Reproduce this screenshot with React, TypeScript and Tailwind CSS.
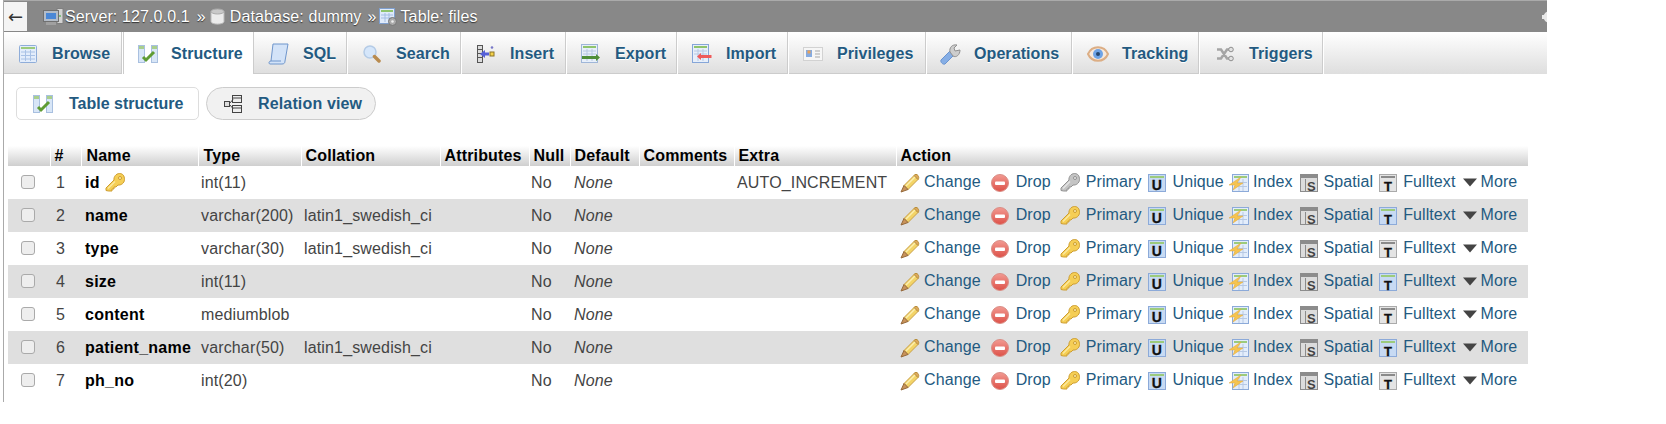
import React from "react";

const S = ({ children, w = 16, h = 16 }: { children: React.ReactNode; w?: number; h?: number }) => (
  <svg width={w} height={h} viewBox={`0 0 ${w} ${h}`} className="shrink-0 block">{children}</svg>
);

const BrowseI = () => (
  <S w={18} h={18}>
    <rect x="0.5" y="0.5" width="17" height="17" rx="1" fill="#e3edfb" stroke="#8fadd9" />
    <rect x="2" y="2" width="14" height="2" fill="#9ccb7c" />
    <path d="M2 7h14M2 10.500h14M2 14h14M6.500 5v11M11.500 5v11" stroke="#a9c2e6" />
  </S>
);
const StructI = () => (
  <S w={20} h={18}>
    <rect x="0.500" y="0.500" width="6" height="17" fill="#d8e6f7" stroke="#a9c0e0" />
    <rect x="13.500" y="0.500" width="6" height="17" fill="#d8e6f7" stroke="#a9c0e0" />
    <rect x="1" y="1" width="5" height="3" fill="#a9cf8d" />
    <rect x="14" y="1" width="5" height="3" fill="#a9cf8d" />
    <path d="M5 12l3 3 8-8" fill="none" stroke="#5f9c33" strokeWidth="3" />
  </S>
);
const SqlI = () => (
  <S w={21} h={22}>
    <path d="M5 1h15l-3 17c0 2-1 3-3 3H2c-1.500 0-1.500-3 1-3L5 1z" fill="#d3e3f8" stroke="#6f96cc" />
    <path d="M3 18h10" stroke="#6f96cc" />
  </S>
);
const SearchI = () => (
  <S w={18} h={18}>
    <circle cx="7" cy="7" r="6" fill="#d5e6fa" stroke="#b4cbe6" strokeWidth="1.500" />
    <path d="M11.500 11.500l4.500 4.500" stroke="#b98b4f" strokeWidth="3.500" strokeLinecap="round" />
  </S>
);
const InsertI = () => (
  <S w={18} h={18}>
    <rect x="0.500" y="0.500" width="5" height="17" fill="#dcdcdc" stroke="#555" />
    <path d="M1 4.500h4M1 8.500h4M1 12.500h4" stroke="#555" />
    <path d="M3 9l5-4v2.500h4v3H8V13z" fill="#5560d8" />
    <rect x="13" y="7" width="4" height="4" fill="#f4d24a" stroke="#8a7326" />
    <circle cx="15" cy="2.500" r="1.300" fill="#7878c8" />
  </S>
);
const ExportI = () => (
  <S w={20} h={20}>
    <rect x="0.500" y="0.500" width="16" height="18" fill="#e7effa" stroke="#9fb6d8" />
    <rect x="2" y="2" width="13" height="2" fill="#8fc46d" />
    <path d="M2 7h13M2 10h13M6 5v12M11 5v12" stroke="#b7c9e4" />
    <path d="M1 12h14v-2l4 3.500-4 3.500v-2H1z" fill="#4f8f3a" />
  </S>
);
const ImportI = () => (
  <S w={20} h={20}>
    <rect x="0.500" y="0.500" width="16" height="18" fill="#e7effa" stroke="#86a6d8" />
    <rect x="2" y="2" width="13" height="2" fill="#8fc46d" />
    <path d="M2 7h13M2 10h13M6 5v12M11 5v12" stroke="#b7c9e4" />
    <path d="M19.500 11H9V9l-4 3.500L9 16v-2h10.500z" fill="#ef5a5a" />
  </S>
);
const PrivI = () => (
  <S w={20} h={16}>
    <rect x="0.500" y="1.500" width="19" height="13" fill="#f6f6f6" stroke="#d2d2d2" />
    <rect x="3" y="4" width="6" height="7" fill="#86abe0" />
    <rect x="4.500" y="4.500" width="3" height="3" fill="#e8a25a" />
    <path d="M12 5h5M12 8h5M12 11h5" stroke="#a9a9a9" />
  </S>
);
const WrenchI = () => (
  <S w={22} h={22}>
    <path d="M1 17l10-10 4 4-10 10c-2 1-5-2-4-4z" fill="#86aee5" stroke="#6a94cf" />
    <path d="M10 9c-1-4 2-8 7-7l-3 3 1 3 5-1c0 5-4 8-7 6z" fill="#cdcdcd" stroke="#909090" />
  </S>
);
const EyeI = () => (
  <S w={22} h={18}>
    <path d="M1 9c4-9 16-9 20 0-4 9-16 9-20 0z" fill="#f7e9dc" stroke="#dcae85" strokeWidth="2" />
    <circle cx="11" cy="9" r="5" fill="#6ea3e6" />
    <circle cx="11" cy="9" r="2" fill="#25466f" />
  </S>
);
const TrigI = () => (
  <S w={18} h={16}>
    <path d="M1 3.500h4l6 9h2M1 12.500h4l6-9h2" fill="none" stroke="#a5a5a5" strokeWidth="2.500" />
    <circle cx="15" cy="3.500" r="2.300" fill="#e2e2e2" stroke="#8f8f8f" />
    <circle cx="15" cy="12.500" r="2.300" fill="#e2e2e2" stroke="#8f8f8f" />
  </S>
);
const RelI = () => (
  <S w={18} h={18}>
    <rect x="8.500" y="0.500" width="9" height="7" fill="#eee" stroke="#444" />
    <rect x="8.500" y="10.500" width="9" height="7" fill="#eee" stroke="#444" />
    <rect x="0.500" y="6.500" width="5" height="5" fill="#ddd" stroke="#444" />
    <path d="M5.500 8.500L9 4.500M5.500 9.500L9 13.500" stroke="#444" />
    <path d="M9 3h8M9 13h8" stroke="#444" />
  </S>
);
const ServerI = () => (
  <S w={21} h={18}>
    <rect x="14" y="0.500" width="6" height="15" fill="#d2d2d2" stroke="#808080" />
    <circle cx="17" cy="8" r="1" fill="#64b864" />
    <rect x="0.500" y="2.500" width="15" height="11" fill="#b3bcc8" stroke="#707070" />
    <rect x="3" y="5" width="10" height="6" fill="#4a87d6" />
    <rect x="3" y="14" width="10" height="3" fill="#a0a0a0" />
  </S>
);
const DbI = () => (
  <S w={15} h={17}>
    <path d="M1 3.500v10c0 3.500 13 3.500 13 0v-10z" fill="#ececec" stroke="#b8b8b8" />
    <ellipse cx="7.500" cy="3.500" rx="6.500" ry="2.500" fill="#c9c9c9" stroke="#aaa" />
  </S>
);
const TableI = () => (
  <S w={18} h={18}>
    <rect x="0.500" y="0.500" width="15" height="15" fill="#dfeafa" stroke="#7f9fce" />
    <rect x="2" y="2" width="12" height="2" fill="#8fc46d" />
    <path d="M2 7h12M2 10h12M6 5v9M10 5v9" stroke="#a4bde2" />
    <circle cx="13.500" cy="13.500" r="4" fill="#aaa" stroke="#777" />
    <circle cx="13.500" cy="13.500" r="1.300" fill="#eee" />
  </S>
);
const GearI = () => (
  <S w={5} h={16}>
    <circle cx="7" cy="8" r="5.500" fill="#e8e8e8" />
    <rect x="0" y="6" width="3" height="4" fill="#e8e8e8" />
  </S>
);

const Pencil = () => (
  <S w={20} h={20}>
    <path d="M4 12.500L14 2.500l4 4-10 10z" fill="#f3d467" stroke="#c9a04a" />
    <path d="M14 2.500c1-1.500 3-1.500 4 0s1 3 0 4z" fill="#dca85a" stroke="#b98f3b" />
    <path d="M6 13l9-9" stroke="#fbeeb0" strokeWidth="1.500" />
    <path d="M4 12.500L1 19l7-2.500z" fill="#c9935a" stroke="#94683a" />
  </S>
);
const DropI = () => (
  <S w={18} h={18}>
    <defs>
      <linearGradient id="dropg" x1="0" y1="0" x2="0" y2="1">
        <stop offset="0" stopColor="#f29a92" />
        <stop offset="1" stopColor="#dd5148" />
      </linearGradient>
    </defs>
    <circle cx="9" cy="9" r="8.500" fill="url(#dropg)" stroke="#d98e86" />
    <rect x="4" y="7.500" width="10" height="3.500" rx="1" fill="#fff" />
  </S>
);
const Key = ({ grey }: { grey?: boolean }) => {
  const f = grey ? "#c4c4c4" : "#f5ce55";
  const s = grey ? "#919191" : "#cd9d30";
  return (
    <S w={20} h={20}>
      <path d="M1 15l8-8c-.500-3 2-6.500 5.500-6.500S19.500 3 19.500 6.500c0 3.500-3.500 6-6.500 5.500l-2 2h-2v2H7v2H3.500L1 17.500z" fill={f} stroke={s} />
      <path d="M3 15.500l7-7" stroke={grey ? "#e5e5e5" : "#fbe9a0"} strokeWidth="1.500" />
      <circle cx="15" cy="5" r="1.500" fill={grey ? "#eee" : "#fdf0b8"} stroke={s} />
    </S>
  );
};
const UniqueI = () => (
  <S w={18} h={18}>
    <rect x="0.500" y="0.500" width="17" height="17" fill="#c7daf3" stroke="#8caad9" />
    <rect x="2" y="2" width="14" height="2" fill="#9ccb7c" />
    <text x="9" y="16" textAnchor="middle" fontFamily="'Liberation Sans', sans-serif" fontWeight="700" fontSize="14" fill="#111" stroke="#111" strokeWidth="0.300">U</text>
  </S>
);
const IndexI = () => (
  <S w={20} h={18}>
    <rect x="3.500" y="0.500" width="16" height="17" fill="#e3edfb" stroke="#8caad9" />
    <rect x="5" y="2" width="13" height="2" fill="#9ccb7c" />
    <path d="M5 8.500h13M5 12.500h13M10 5v12M14 5v12" stroke="#b7c9e4" />
    <path d="M12 3L0 11h6l-2 5 10-7H8z" fill="#f5c451" stroke="#e2a93a" strokeWidth="0.500" />
  </S>
);
const SpatialI = () => (
  <S w={18} h={18}>
    <rect x="0.500" y="0.500" width="17" height="17" fill="#dcdcdc" stroke="#8c8c8c" />
    <rect x="1" y="1" width="16" height="3" fill="#8c8c8c" />
    <path d="M5.500 5v12" stroke="#8c8c8c" />
    <text x="11.500" y="16.500" textAnchor="middle" fontFamily="'Liberation Sans', sans-serif" fontWeight="700" fontSize="13" fill="#444">S</text>
  </S>
);
const FulltextI = ({ on }: { on?: boolean }) => (
  <S w={18} h={18}>
    <rect x="0.500" y="0.500" width="17" height="17" fill={on ? "#c7daf3" : "#e4e4e4"} stroke={on ? "#8caad9" : "#aaa"} />
    <rect x="2" y="2" width="14" height="2" fill={on ? "#9ccb7c" : "#8a8a8a"} />
    <text x="9" y="16.500" textAnchor="middle" fontFamily="'Liberation Sans', sans-serif" fontWeight="700" fontSize="13" fill="#111" stroke="#111" strokeWidth="0.300">T</text>
  </S>
);
const MoreI = () => (
  <S w={14} h={9}>
    <path d="M0 0.500h14L7 8.500z" fill="#444" />
  </S>
);

const tabs = [
  { label: "Browse", w: "w-[119px]", icon: <BrowseI />, iw: "w-[48px]" },
  { label: "Structure", w: "w-[131px]", icon: <StructI />, iw: "w-[47px]" },
  { label: "SQL", w: "w-[94px]", icon: <SqlI />, iw: "w-[49px]" },
  { label: "Search", w: "w-[114px]", icon: <SearchI />, iw: "w-[48px]" },
  { label: "Insert", w: "w-[105px]", icon: <InsertI />, iw: "w-[48px]" },
  { label: "Export", w: "w-[111px]", icon: <ExportI />, iw: "w-[48px]" },
  { label: "Import", w: "w-[111px]", icon: <ImportI />, iw: "w-[48px]" },
  { label: "Privileges", w: "w-[138px]", icon: <PrivI />, iw: "w-[48px]" },
  { label: "Operations", w: "w-[146px]", icon: <WrenchI />, iw: "w-[47px]" },
  { label: "Tracking", w: "w-[127px]", icon: <EyeI />, iw: "w-[49px]" },
  { label: "Triggers", w: "w-[124px]", icon: <TrigI />, iw: "w-[49px]" },
];

const rows = [
  { n: 1, name: "id", type: "int(11)", coll: "", extra: "AUTO_INCREMENT", pk: true },
  { n: 2, name: "name", type: "varchar(200)", coll: "latin1_swedish_ci" },
  { n: 3, name: "type", type: "varchar(30)", coll: "latin1_swedish_ci" },
  { n: 4, name: "size", type: "int(11)", coll: "" },
  { n: 5, name: "content", type: "mediumblob", coll: "" },
  { n: 6, name: "patient_name", type: "varchar(50)", coll: "latin1_swedish_ci" },
  { n: 7, name: "ph_no", type: "int(20)", coll: "" },
];

const headers: [string, string, string][] = [
  ["", "w-[42px]", "pl-[4px]"],
  ["#", "w-[31px]", "pl-[4px]"],
  ["Name", "w-[117px]", "pl-[5px]"],
  ["Type", "w-[103px]", "pl-[5px]"],
  ["Collation", "w-[139px]", "pl-[4px]"],
  ["Attributes", "w-[89px]", "pl-[4px]"],
  ["Null", "w-[41px]", "pl-[4px]"],
  ["Default", "w-[69px]", "pl-[4px]"],
  ["Comments", "w-[95px]", "pl-[4px]"],
  ["Extra", "w-[162px]", "pl-[4px]"],
  ["Action", "", "pl-[4px]"],
];

const A = ({ icon, label, ml, gap }: { icon: React.ReactNode; label: string; ml: string; gap: string }) => (
  <span className={`flex items-center ${gap} ${ml}`}>
    {icon}
    <span className="text-[#235a81] mb-[2px] tracking-[0.1px]">{label}</span>
  </span>
);

export default function App() {
  return (
    <div className="w-[1666px] h-[424px] bg-white overflow-hidden font-['Liberation_Sans',Arial,sans-serif] text-[16px] leading-[18px]">
      <div className="w-[1544px] h-[402px] border-l border-[#aaa] ml-[3px] overflow-hidden">
        <div className="h-[32px] bg-[#888] border-t border-[#aaa] flex items-center text-white [text-shadow:0_1px_1px_#333] tracking-[0.12px]">
          <div className="w-[23px] h-[29px] bg-[#f4f4f4] flex items-center justify-center text-[#333] text-[18px] font-['DejaVu_Sans',sans-serif] [text-shadow:none]">←</div>
          <div className="flex items-center ml-[16px]">
            <ServerI />
            <span className="ml-[1px]">Server: 127.0.0.1</span>
            <span className="ml-[7px]">»</span>
            <span className="ml-[4px]"><DbI /></span>
            <span className="ml-[5px]">Database: dummy</span>
            <span className="ml-[6px]">»</span>
            <span className="ml-[2px]"><TableI /></span>
            <span className="ml-[4px]">Table: files</span>
          </div>
          <div className="ml-auto"><GearI /></div>
        </div>
        <div className="h-[42px] flex bg-linear-to-b from-white to-[#dedede]">
          {tabs.map((t) => (
            <div
              key={t.label}
              className={`${t.w} h-[42px] pt-[1px] flex items-center shrink-0 border-r border-white font-bold text-[#235a81] [text-shadow:0_1px_0_#fff] tracking-[0.08px] ${t.label === "Structure" ? "bg-white border-l border-l-[#ccc] border-r-[#ccc]" : "shadow-[inset_-1px_0_0_#ccc,inset_0_-1px_0_#ccc]"}`}
            >
              <span className={`${t.iw} shrink-0 flex justify-center`}>{t.icon}</span>
              <span>{t.label}</span>
            </div>
          ))}
        </div>
        <div className="flex gap-[7px] ml-[12px] mt-[13px]">
          <div className="w-[183px] h-[33px] bg-white border border-[#ddd] rounded-[5px] flex items-center font-bold text-[#235a81]">
            <span className="w-[52px] flex justify-center"><StructI /></span>
            <span>Table structure</span>
          </div>
          <div className="w-[170px] h-[33px] bg-[#f1f1f1] border border-[#ccc] rounded-[17px] flex items-center font-bold text-[#235a81] tracking-[0.15px]">
            <span className="w-[51px] flex justify-center"><RelI /></span>
            <span>Relation view</span>
          </div>
        </div>
        <table className="ml-[4px] mt-[26px] w-[1520px] table-fixed border-collapse text-[#444] tracking-[0.15px]">
          <thead>
            <tr className="h-[20px] bg-linear-to-b from-white to-[#cfcfcf]">
              {headers.map(([h, w, p], i) => (
                <th key={i} className={`${w} ${p} py-0 pr-0 text-left font-bold text-black ${i < headers.length - 1 ? "border-r border-white" : ""}`}>{h}</th>
              ))}
            </tr>
          </thead>
          <tbody>
            {rows.map((r) => (
              <tr key={r.n} className={`h-[33px] ${r.n % 2 === 0 ? "bg-[#dfdfdf]" : "bg-white"}`}>
                <td className="p-0 pl-[13px]">
                  <span className="block w-[14px] h-[14px] rounded-[3px] border border-[#aaa] bg-[#eee] mb-[2px]" />
                </td>
                <td className="p-0 pl-[6px]">{r.n}</td>
                <td className="p-0 pl-[4px] font-bold text-black tracking-[0.25px]">
                  <span className="flex items-center gap-[5px]">
                    {r.name}
                    {r.pk && <Key />}
                  </span>
                </td>
                <td className="p-0 pl-[3px]">{r.type}</td>
                <td className="p-0 pl-[3px] whitespace-nowrap">{r.coll}</td>
                <td className="p-0" />
                <td className="p-0 pl-[2px]">No</td>
                <td className="p-0 pl-[4px] italic">None</td>
                <td className="p-0" />
                <td className="p-0 pl-[3px] whitespace-nowrap">{r.extra}</td>
                <td className="p-0 pl-[4px] whitespace-nowrap">
                  <div className="flex items-center">
                    <A icon={<Pencil />} label="Change" ml="" gap="gap-[4px]" />
                    <A icon={<DropI />} label="Drop" ml="ml-[10px]" gap="gap-[7px]" />
                    <A icon={<Key grey={r.pk} />} label="Primary" ml="ml-[9px]" gap="gap-[6px]" />
                    <A icon={<UniqueI />} label="Unique" ml="ml-[6px]" gap="gap-[7px]" />
                    <A icon={<IndexI />} label="Index" ml="ml-[5px]" gap="gap-[4px]" />
                    <A icon={<SpatialI />} label="Spatial" ml="ml-[7px]" gap="gap-[6px]" />
                    <A icon={<FulltextI on={r.n % 2 === 0} />} label="Fulltext" ml="ml-[6px]" gap="gap-[6px]" />
                    <A icon={<MoreI />} label="More" ml="ml-[7px]" gap="gap-[4px]" />
                  </div>
                </td>
              </tr>
            ))}
          </tbody>
        </table>
      </div>
    </div>
  );
}
